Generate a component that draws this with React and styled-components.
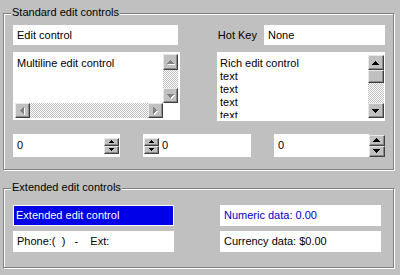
import React from "react";
import styled, { createGlobalStyle } from "styled-components";

const GlobalStyle = createGlobalStyle`
	html, body {
		margin: 0;
		padding: 0;
		background: #c0c0c0;
	}
	body {
		font-family: "Liberation Sans", Arial, sans-serif;
		font-size: 11px;
		color: #000;
	}
`;

// pixel arrow, rows = 4 gives the 7x4 scrollbar arrow, rows = 3 the 5x3 spin arrow
const Arrow = ({ dir, rows = 4, disabled }) => {
	const size = rows * 2 - 1;
	const vertical = dir === "up" || dir === "down";
	const rects = [];
	for (let i = 0; i < rows; i++) {
		const len = i * 2 + 1;
		const off = rows - 1 - i;
		const line = dir === "up" || dir === "left" ? i : rows - 1 - i;
		rects.push(vertical ? { x: off, y: line, w: len, h: 1 } : { x: line, y: off, w: 1, h: len });
	}
	const w = vertical ? size : rows;
	const h = vertical ? rows : size;
	return (
		<svg width={w + 1} height={h + 1} viewBox={`0 0 ${w + 1} ${h + 1}`} shapeRendering="crispEdges">
			{disabled &&
				rects.map((r, i) => <rect key={"s" + i} x={r.x + 1} y={r.y + 1} width={r.w} height={r.h} fill="#fff" />)}
			{rects.map((r, i) => (
				<rect key={i} x={r.x} y={r.y} width={r.w} height={r.h} fill={disabled ? "#808080" : "#000"} />
			))}
		</svg>
	);
};

const Page = styled.div`
	width: 400px;
	height: 275px;
	box-sizing: border-box;
	padding: 13px 0 0 3px;
	overflow: hidden;
	display: flex;
	flex-direction: column;
	gap: 18px;
`;

const Group = styled.div`
	position: relative;
	box-sizing: border-box;
	width: 391px;
	height: ${(p) => p.$height}px;
	padding: ${(p) => p.$padTop}px 8px 0 9px;
	border: 1px solid #808080;
	box-shadow: inset 1px 1px 0 #fff, 1px 1px 0 #fff;
`;

const Legend = styled.span`
	position: absolute;
	top: -8px;
	left: 7px;
	padding: 0 1px;
	line-height: 13px;
	background: #c0c0c0;
	white-space: nowrap;
`;

const Row = styled.div`
	display: flex;
	justify-content: space-between;
	align-items: ${(p) => p.$align || "center"};
	margin-top: ${(p) => p.$top || 0}px;
`;

const Field = styled.div`
	box-sizing: border-box;
	width: ${(p) => p.$w}px;
	height: ${(p) => p.$h}px;
	line-height: ${(p) => p.$h}px;
	padding-left: 4px;
	background: #fff;
	color: ${(p) => p.$color || "#000"};
	white-space: pre;
	overflow: hidden;
`;

const HotKeyWrap = styled.div`
	display: flex;
	align-items: center;
	gap: 7px;
`;

const Label = styled.span`
	white-space: nowrap;
`;

const Btn = styled.div`
	box-sizing: border-box;
	width: ${(p) => p.$w}px;
	height: ${(p) => p.$h}px;
	flex: none;
	background: #c0c0c0;
	border: 1px solid;
	border-color: #e8e8e8 #404040 #404040 #e8e8e8;
	box-shadow: inset -1px -1px 0 #8a8a8a;
	display: flex;
	align-items: center;
	justify-content: center;
	svg {
		display: block;
		margin: 0 0 -1px 0;
	}
`;

const Track = styled.div`
	flex: 1;
	background: repeating-conic-gradient(#c0c0c0 0 25%, #fff 0 50%) 0 0 / 2px 2px;
`;

const MultiBox = styled.div`
	box-sizing: border-box;
	width: 167px;
	height: 68px;
	padding: 2px;
	background: #fff;
	display: grid;
	grid-template-columns: 1fr 15px;
	grid-template-rows: 1fr 15px;
`;

const TextArea = styled.div`
	padding: 3px 2px;
	line-height: 13px;
	white-space: nowrap;
	overflow: hidden;
`;

const VBar = styled.div`
	display: flex;
	flex-direction: column;
	width: ${(p) => p.$w || 15}px;
`;

const HBar = styled.div`
	display: flex;
`;

const RichBox = styled.div`
	box-sizing: border-box;
	width: 168px;
	height: 69px;
	background: #fff;
	display: flex;
	padding: 3px 1px 3px 0;
`;

const RichText = styled.div`
	flex: 1;
	padding: 2px 0 0 3px;
	line-height: 13px;
	overflow: hidden;
`;

const SpinBox = styled.div`
	box-sizing: border-box;
	width: ${(p) => p.$w}px;
	height: 23px;
	display: flex;
	align-items: center;
	flex-direction: ${(p) => (p.$left ? "row" : "row-reverse")};
	justify-content: ${(p) => (p.$left ? "flex-start" : "space-between")};
	background: ${(p) => (p.$outside ? "transparent" : "#fff")};
	padding: ${(p) => (p.$outside ? "0" : "0 1px")};
`;

const SpinText = styled.div`
	flex: 1;
	align-self: stretch;
	line-height: 23px;
	padding-left: ${(p) => p.$pad}px;
	background: #fff;
`;

const SpinCol = styled.div`
	display: flex;
	flex-direction: column;
`;

const ExtGrid = styled.div`
	display: grid;
	grid-template-columns: 161px 161px;
	grid-template-rows: 21px 21px;
	column-gap: 46px;
	row-gap: 5px;
`;

const Selected = styled.div`
	background: #fff;
	padding: 1px;
`;

const SelectedInner = styled.div`
	height: 19px;
	line-height: 19px;
	padding-left: 2px;
	background: #0000e8;
	color: #fff;
	white-space: nowrap;
`;

const Spin = ({ w, h, rows }) => (
	<SpinCol>
		<Btn $w={w} $h={h}>
			<Arrow dir="up" rows={rows} />
		</Btn>
		<Btn $w={w} $h={h}>
			<Arrow dir="down" rows={rows} />
		</Btn>
	</SpinCol>
);

const App = () => {
	return (
		<>
			<GlobalStyle />
			<Page>
				<Group $height={157} $padTop={11}>
					<Legend>Standard edit controls</Legend>
					<Row>
						<Field $w={165} $h={20}>Edit control</Field>
						<HotKeyWrap>
							<Label>Hot Key</Label>
							<Field $w={121} $h={20}>None</Field>
						</HotKeyWrap>
					</Row>
					<Row $top={7} $align="flex-start">
						<MultiBox>
							<TextArea>Multiline edit control</TextArea>
							<VBar>
								<Btn $w={15} $h={16}>
									<Arrow dir="up" disabled />
								</Btn>
								<Track />
								<Btn $w={15} $h={15}>
									<Arrow dir="down" disabled />
								</Btn>
							</VBar>
							<HBar>
								<Btn $w={15} $h={15}>
									<Arrow dir="left" disabled />
								</Btn>
								<Track />
								<Btn $w={15} $h={15}>
									<Arrow dir="right" disabled />
								</Btn>
							</HBar>
							<div />
						</MultiBox>
						<RichBox>
							<RichText>
								Rich edit control
								<br />text
								<br />text
								<br />text
								<br />text
							</RichText>
							<VBar $w={16}>
								<Btn $w={16} $h={15}>
									<Arrow dir="up" />
								</Btn>
								<Btn $w={16} $h={13} />
								<Track />
								<Btn $w={16} $h={15}>
									<Arrow dir="down" />
								</Btn>
							</VBar>
						</RichBox>
					</Row>
					<Row $top={13}>
						<SpinBox $w={107}>
							<Spin w={15} h={8} rows={3} />
							<SpinText $pad={3}>0</SpinText>
						</SpinBox>
						<SpinBox $w={108} $left>
							<Spin w={15} h={8} rows={3} />
							<SpinText $pad={3}>0</SpinText>
						</SpinBox>
						<SpinBox $w={111} $outside>
							<Spin w={16} h={11} rows={4} />
							<SpinText $pad={4}>0</SpinText>
						</SpinBox>
					</Row>
				</Group>
				<Group $height={80} $padTop={16}>
					<Legend>Extended edit controls</Legend>
					<ExtGrid>
						<Selected>
							<SelectedInner>Extended edit control</SelectedInner>
						</Selected>
						<Field $w={161} $h={21} $color="#0000c8">Numeric data: 0.00</Field>
						<Field $w={161} $h={21}>{"Phone:(  )   -    Ext:"}</Field>
						<Field $w={161} $h={21}>Currency data: $0.00</Field>
					</ExtGrid>
				</Group>
			</Page>
		</>
	);
};

export default App;
